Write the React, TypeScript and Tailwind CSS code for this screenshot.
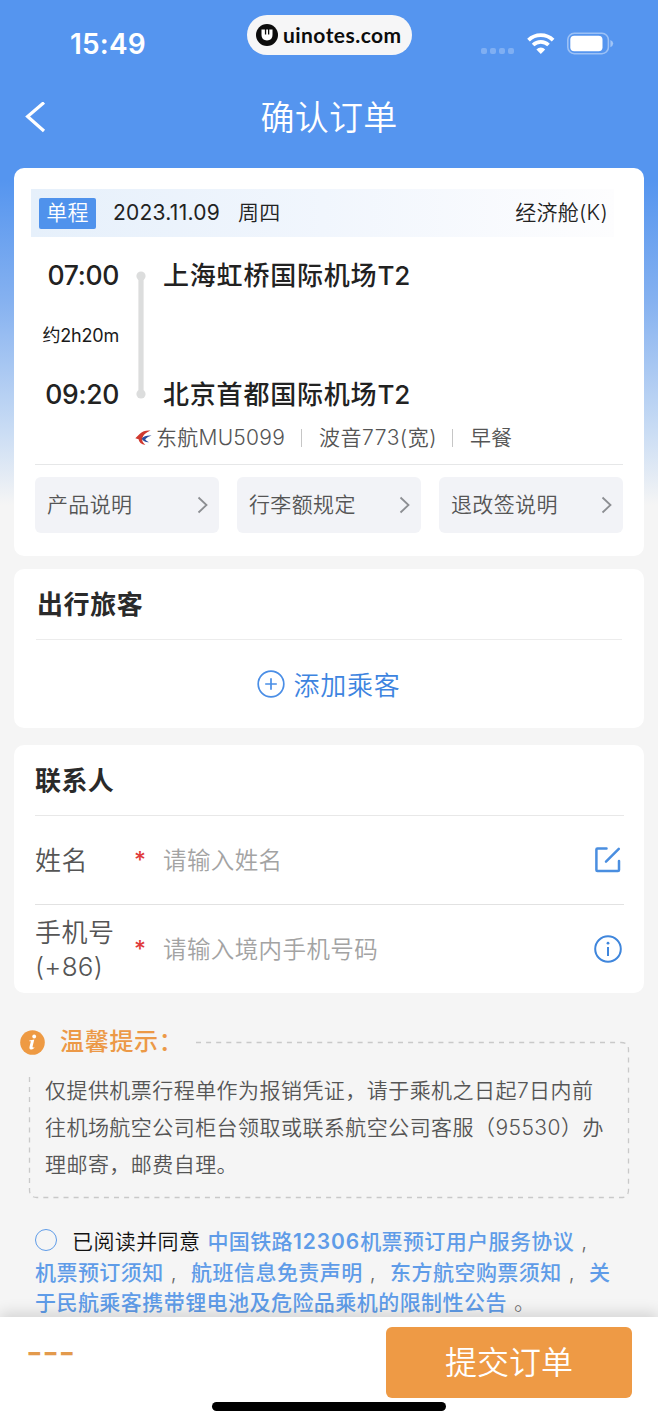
import type { ReactNode } from "react";

const shortcuts = ["产品说明", "行李额规定", "退改签说明"];

function Chevron() {
  return (
    <svg width="12" height="18" viewBox="0 0 12 18" fill="none" stroke="#8c8e92" strokeWidth="1.8">
      <path d="M1.5 1.5L9.5 9L1.5 16.5" />
    </svg>
  );
}

function StatusBar() {
  return (
    <div className="flex h-[68px] items-start">
      <div className="mt-[26px] ml-[70px] w-[177px] text-[28px] leading-[36px] font-semibold tracking-[0.2px] text-white">
        15:49
      </div>
      <div className="mt-[15px] flex h-10 w-[165px] items-center rounded-full bg-[#f6f6f7] pl-[9px]">
        <svg width="22" height="22" viewBox="0 0 22 22">
          <circle cx="11" cy="11" r="11" fill="#0c0c0c" />
          <path d="M5.5 5.4H8.9V10.6H10.2V5.4H12V10.6H13.3V5.4H16.5V11Q16.5 16.4 11 16.4Q5.5 16.4 5.5 11Z" fill="#fff" />
        </svg>
        <span className="ml-[5px] font-['Lato',sans-serif] text-[21px] leading-10 font-bold tracking-[0.45px] text-[#0c0c0c]">
          uinotes.com
        </span>
      </div>
      <div className="mt-[48px] ml-[69px] flex gap-[3px]">
        {[0, 1, 2, 3].map((i) => (
          <span key={i} className="size-1.5 rounded-[2px] bg-white/25" />
        ))}
      </div>
      <svg className="mt-8 ml-[12px]" width="30" height="23" viewBox="0 0 30 23" fill="none">
        <path d="M2.5 8.1A17.6 17.6 0 0 1 27.1 8.1" stroke="#fff" strokeWidth="3.8" />
        <path d="M7.1 13A11 11 0 0 1 22.5 13" stroke="#fff" strokeWidth="3.7" />
        <path d="M10.4 17.4A6.3 6.3 0 0 1 19.2 17.4L14.8 22Z" fill="#fff" />
      </svg>
      <svg className="mt-8 ml-[11px]" width="48" height="23" viewBox="0 0 48 23" fill="none">
        <rect x="0.8" y="1.3" width="40.6" height="20.4" rx="6.5" stroke="#fff" strokeOpacity="0.42" strokeWidth="1.6" />
        <rect x="3.3" y="3.8" width="32.2" height="15.4" rx="4" fill="#fff" />
        <path d="M43.4 8V15.2Q46.2 13.8 46.2 11.6Q46.2 9.4 43.4 8Z" fill="#fff" fillOpacity="0.45" />
      </svg>
    </div>
  );
}

function NavBar() {
  return (
    <div className="flex h-[100px] items-center justify-between px-6">
      <svg width="24" height="32" viewBox="0 0 24 32" fill="none" stroke="#fff" strokeWidth="3.2">
        <path d="M20 0.5L3.6 14.5L20 29" />
      </svg>
      <h1 className="text-[34px] leading-[50px] font-[350] tracking-[0.3px] text-white">确认订单</h1>
      <span className="w-6" />
    </div>
  );
}

function AirlineLogo() {
  return (
    <svg width="17" height="16" viewBox="0 0 17 16">
      <path d="M15.5 0.6Q8.8 0 5.2 3.6L0.3 8.2L3.6 9.2Q4 14 10.4 14.9Q6.6 11.8 7.2 8.6Q8.2 3.6 15.5 0.6Z" fill="#d0392f" />
      <path d="M16.6 5.6Q9.6 5 6.6 8.8Q9 12.6 14 12.2Q10.8 10.8 10.2 9.2Q12.4 6.8 16.6 5.6Z" fill="#2d4f9e" />
    </svg>
  );
}

function FlightCard() {
  return (
    <section className="h-[388px] rounded-[10px] bg-white pt-[21px] pr-[21px] pl-[21px]">
      <div className="-ml-[4px] mr-[9px] flex h-12 items-center bg-linear-to-r from-[#e6f0fb] via-[#f1f6fd] to-[#fdfdfe] pl-2 text-[21px] font-[350] text-[#222]">
        <span className="flex h-[31px] w-[57px] items-center justify-center rounded-[2px] bg-[#4f92ec] pb-px tracking-[0.3px] text-white">
          单程
        </span>
        <span className="ml-[17px] font-normal tracking-[0.25px]">2023.11.09</span>
        <span className="ml-[18px] tracking-[0.2px]">周四</span>
        <span className="mr-[6px] ml-auto tracking-[0.25px]">经济舱(K)</span>
      </div>

      <div className="flex h-[176px]">
        <div className="flex w-[84px] flex-col items-end text-[26.5px] font-[450] text-[#222]">
          <span className="mt-[20px] leading-9 tracking-[-0.3px]">07:00</span>
          <span className="mt-[29px] text-[18px] leading-7 font-normal tracking-[-0.2px] whitespace-nowrap text-[#1a1a1a]">
            约2h20m
          </span>
          <span className="mt-[26px] leading-9 tracking-[-0.3px]">09:20</span>
        </div>
        <svg className="mt-[34px] ml-[17px]" width="10" height="128" viewBox="0 0 10 128" fill="#dcdddd">
          <circle cx="5" cy="5" r="4.6" />
          <rect x="2.4" y="5" width="5.2" height="118" />
          <circle cx="5" cy="123" r="4.6" />
        </svg>
        <div className="ml-[17px] flex flex-col text-[26px] font-[450] tracking-[0.8px] text-[#222]">
          <span className="mt-[21px] leading-9">
            上海虹桥国际机场<span className="tracking-[-0.2px]">T2</span>
          </span>
          <span className="mt-[83px] leading-9">
            北京首都国际机场<span className="tracking-[-0.2px]">T2</span>
          </span>
        </div>
      </div>

      <div className="flex h-[52px] items-center border-b-[1.5px] border-[#e6e7e8] pb-[2px] pl-[100px] text-[21px] font-[350] text-[#555]">
        <AirlineLogo />
        <span className="ml-1 tracking-[0.25px]">东航MU5099</span>
        <span className="ml-4 mr-[17px] h-[18px] w-px bg-[#c6c6c6]" />
        <span className="tracking-[0.5px]">波音773(宽)</span>
        <span className="ml-[15px] mr-[17px] h-[18px] w-px bg-[#c6c6c6]" />
        <span>早餐</span>
      </div>

      <div className="mt-[12px] flex gap-[18px]">
        {shortcuts.map((label) => (
          <button
            key={label}
            className="flex h-14 flex-1 items-center justify-between rounded-md bg-[#f2f3f7] pr-[10px] pl-3 text-[21px] font-[350] tracking-[0.35px] text-[#555]"
          >
            <span className="-mt-px">{label}</span>
            <Chevron />
          </button>
        ))}
      </div>
    </section>
  );
}

function PassengerCard() {
  return (
    <section className="mt-[13px] h-[159px] rounded-[10px] bg-white px-[22px]">
      <h2 className="flex h-[71px] items-center border-b border-[#ececec] pl-px text-[26px] font-bold tracking-[0.6px] text-[#2a2a2a]">
        出行旅客
      </h2>
      <button className="flex h-[88px] w-full items-center justify-center gap-2 text-[26px] font-[350] tracking-[0.8px] text-[#3d84e0]">
        <svg width="28" height="28" viewBox="0 0 28 28" fill="none" stroke="#4a8ee6" strokeWidth="1.7">
          <circle cx="14" cy="14" r="12.8" />
          <path d="M8.2 14H19.8M14 8.2V19.8" />
        </svg>
        <span className="pt-0.5">添加乘客</span>
      </button>
    </section>
  );
}

function ContactRow({ label, placeholder, icon }: { label: ReactNode; placeholder: string; icon: ReactNode }) {
  return (
    <div className="flex h-[88px] items-center pr-0.5">
      <span className="w-[99px] pt-0.5 text-[26px] leading-[34px] font-[350] tracking-[0.5px] text-[#555]">{label}</span>
      <span className="w-[29px] text-[23px] leading-[34px] font-medium text-[#e03a3a]">*</span>
      <span className="flex-1 pt-0.5 text-[23.5px] leading-[34px] font-[350] tracking-[0.4px] text-[#a3a3a3]">
        {placeholder}
      </span>
      {icon}
    </div>
  );
}

function ContactCard() {
  return (
    <section className="mt-[17px] h-[248px] rounded-[10px] bg-white pr-5 pl-[21px]">
      <h2 className="flex h-[71px] items-center border-b border-[#e8e8e8] text-[26px] font-bold tracking-[0.4px] text-[#2a2a2a]">
        联系人
      </h2>
      <ContactRow
        label="姓名"
        placeholder="请输入姓名"
        icon={
          <svg width="28" height="28" viewBox="0 0 28 28" fill="none" stroke="#4a8ee0" strokeWidth="2.5" strokeLinecap="round" strokeLinejoin="round">
            <path d="M12.5 2.6H3.4Q2.4 2.6 2.4 3.6V24Q2.4 25 3.4 25H24Q25 25 25 24V15" />
            <path d="M12 15.6L24.8 2.8" />
          </svg>
        }
      />
      <div className="border-t-[1.5px] border-[#e2e2e2]">
        <ContactRow
          label={
            <>
              手机号
              <br />
              <span className="tracking-[0.3px]">(+86)</span>
            </>
          }
          placeholder="请输入境内手机号码"
          icon={
            <svg width="28" height="28" viewBox="0 0 28 28" fill="none" stroke="#3f86dc" strokeWidth="2">
              <circle cx="14" cy="14" r="12.8" />
              <path d="M14 12V21" />
              <circle cx="14" cy="8.2" r="1.4" fill="#3f86dc" stroke="none" />
            </svg>
          }
        />
      </div>
    </section>
  );
}

function Notice() {
  return (
    <section className="relative mt-[33px] h-[173px]">
      <svg className="absolute top-[15px] left-[14px]" width="602" height="158" viewBox="0 0 602 158" fill="none" stroke="#c9c9c9" strokeWidth="1.3" strokeDasharray="5 5.1">
        <path d="M168 1.5H593Q600.5 1.5 600.5 8.5V149Q600.5 156.5 593 156.5H9Q1.5 156.5 1.5 149V31" />
      </svg>
      <div className="flex h-8 items-center pl-[6px]">
        <svg width="25" height="25" viewBox="0 0 25 25">
          <circle cx="12.5" cy="12.5" r="12.3" fill="#ee9a43" />
          <path d="M9.3 10.4L14.3 9.6L12.6 16.6Q12.3 18.3 14.8 16.9Q13.1 19.7 10.9 19.4Q8.9 19 9.6 16.4L10.9 11.2L9.3 11.3Z" fill="#fff" />
          <circle cx="14.2" cy="6.5" r="1.9" fill="#fff" />
        </svg>
        <h3 className="ml-[15px] text-[24px] leading-8 font-medium tracking-[0.7px] text-[#ec9947]">温馨提示：</h3>
      </div>
      <div className="pt-[14px] pl-[31px] text-[21px] leading-[37px] font-[350] tracking-[0.45px] whitespace-nowrap text-[#555]">
        <p>仅提供机票行程单作为报销凭证，请于乘机之日起7日内前</p>
        <p>往机场航空公司柜台领取或联系航空公司客服（95530）办</p>
        <p>理邮寄，邮费自理。</p>
      </div>
    </section>
  );
}

function Link({ children }: { children: ReactNode }) {
  return <a className="font-medium text-[#5f9ce8]">{children}</a>;
}

function Agreement() {
  return (
    <div className="mt-[27px] pl-[21px] text-[21px] leading-[31px] tracking-[0.4px] whitespace-nowrap text-[#666]">
      <div className="flex">
        <span className="mt-[3px] mr-[15px] size-[22px] rounded-full border-[1.5px] border-[#5f9ce8]" />
        <span className="mr-[7px] font-[350] text-[#111]">已阅读并同意</span>
        <Link>
          中国铁路<span className="font-semibold tracking-[0.9px]">12306</span>机票预订用户服务协议
        </Link>
        <span className="ml-[7px] font-light">,</span>
      </div>
      <div className="flex tracking-[0.45px]">
        <Link>机票预订须知</Link>
        <span className="mr-[14px] ml-[7px] font-light">,</span>
        <Link>航班信息免责声明</Link>
        <span className="mr-[14px] ml-[7px] font-light">,</span>
        <Link>东方航空购票须知</Link>
        <span className="mr-[14px] ml-[7px] font-light">,</span>
        <Link>关</Link>
      </div>
      <div className="-mt-px flex tracking-[0.45px]">
        <Link>于民航乘客携带锂电池及危险品乘机的限制性公告</Link>
        <span className="ml-[7px] font-light">。</span>
      </div>
    </div>
  );
}

function Footer() {
  return (
    <footer className="absolute inset-x-0 bottom-0 h-[107px] bg-white shadow-[0_-4px_14px_rgba(0,0,0,0.14)]">
      <div className="flex justify-between pt-[10px] pr-[26px] pl-[26px]">
        <span className="text-[36px] leading-[50px] font-medium tracking-[-0.4px] text-[#e39a4c]">---</span>
        <button className="h-[71px] w-[246px] rounded-md bg-[#ee9a45] text-[32px] font-[350] text-white">提交订单</button>
      </div>
      <div className="mx-auto mt-1 h-[9px] w-[234px] rounded-full bg-black" />
    </footer>
  );
}

export default function App() {
  return (
    <div className="relative h-[1424px] w-[658px] overflow-hidden bg-[#f5f5f5] bg-linear-[180deg,#5595ef_0px,#5595ef_180px,#85b1f0_300px,#c9dcf4_430px,#f5f5f5_505px] font-['Inter','Noto_Sans_CJK_SC',sans-serif]">
      <StatusBar />
      <NavBar />
      <main className="px-[14px]">
        <FlightCard />
        <PassengerCard />
        <ContactCard />
        <Notice />
        <Agreement />
      </main>
      <Footer />
    </div>
  );
}
